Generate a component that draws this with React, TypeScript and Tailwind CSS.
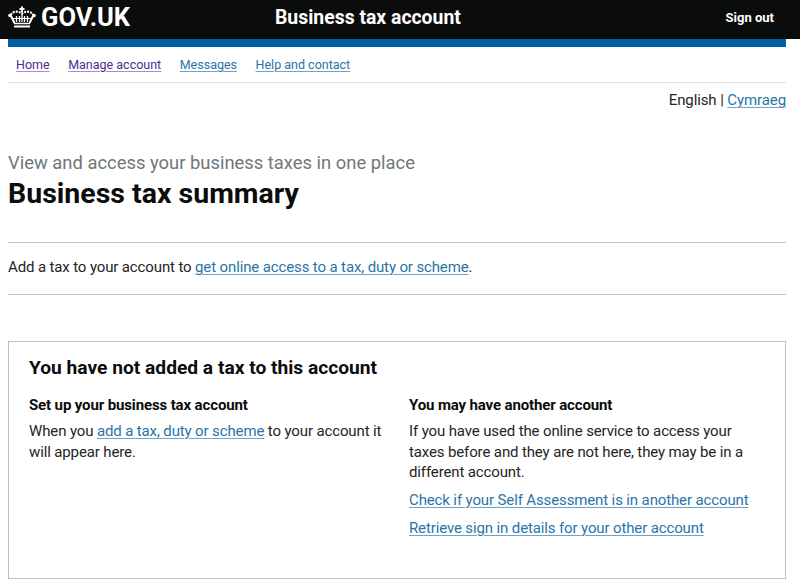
import React from 'react'

const linkClass = 'text-[#2b74a8] underline decoration-1 decoration-[#6ea3cb] underline-offset-2'
const visitedClass = 'text-[#4c2c92] underline decoration-1 decoration-[#a48fc9] underline-offset-2'

function Crown() {
  return (
    <svg viewBox="0 0 28 22" className="w-[28px] h-[22px] mb-[2px]" fill="none" stroke="#fff">
      <path d="M14 0.500v6M11.500 3h5" strokeWidth="2" />
      <path d="M6 17.500h16" strokeWidth="1.500" />
      <path d="M6 20.500h16" strokeWidth="2" />
      <path d="M6.500 17 3 10M21.500 17 25 10" strokeWidth="2" />
      <path d="M3 9c1-3.500 7-4.500 11-1.500C18 4.500 24 5.500 25 9" strokeWidth="2.200" strokeDasharray="2 1" />
      <path d="M8.500 10v6M11.500 10v6M14 8v8M16.500 10v6M19.500 10v6" strokeWidth="1.300" />
      <path d="M5 12.500h18" strokeWidth="1" />
      <circle cx="2" cy="9.500" r="1.800" fill="#fff" stroke="none" />
      <circle cx="26" cy="9.500" r="1.800" fill="#fff" stroke="none" />
    </svg>
  )
}

export default function App() {
  return (
    <div className="font-['Roboto','Liberation_Sans',sans-serif] text-[#242525] bg-white h-[588px] overflow-hidden">
      <header className="h-[39px] pb-[3px] bg-[#0b0c0c] text-white flex items-center">
        <div className="w-[275px] pl-[8px] flex items-center gap-[5px]">
          <Crown />
          <span className="text-[25.500px] font-bold leading-none">GOV.UK</span>
        </div>
        <div className="flex-1 text-[19.400px] font-bold">Business tax account</div>
        <div className="pr-[26px] text-[13px] font-bold">Sign out</div>
      </header>

      <div className="pl-[8px] pr-[14px]">
        <div className="h-[8px] bg-[#005ea5]" />
        <nav className="h-[36px] pt-[1px] border-b border-[#dee0e2] flex items-center gap-[18.500px] pl-[8px] text-[12.500px]">
          <a className={visitedClass}>Home</a>
          <a className={visitedClass}>Manage account</a>
          <a className={linkClass}>Messages</a>
          <a className={linkClass}>Help and contact</a>
        </nav>
        <div className="text-right text-[15px] tracking-[-0.100px] leading-[20px] pt-[7px]">
          English | <a className={linkClass}>Cymraeg</a>
        </div>

        <p className="mt-[41px] text-[18.400px] leading-[24px] text-[#6f777b]">View and access your business taxes in one place</p>
        <h1 className="text-[28.500px] font-bold leading-[36px] mt-[1px] text-[#0b0c0c]">Business tax summary</h1>

        <div className="mt-[30px] border-y border-[#bfc1c3] h-[53px] flex items-center pb-[2px] text-[15px] tracking-[-0.130px]">
          <span>
            Add a tax to your account to <a className={linkClass}>get online access to a tax, duty or scheme</a>.
          </span>
        </div>

        <section className="mt-[46px] h-[238px] border border-[#bfc1c3] pt-[13px] px-[20px]">
          <h2 className="text-[19.200px] font-bold leading-[26px] text-[#0b0c0c]">You have not added a tax to this account</h2>
          <div className="grid grid-cols-[360px_357px] gap-[20px] mt-[14px] text-[15px] tracking-[-0.130px] leading-[21px]">
            <div>
              <h3 className="font-bold text-[#0b0c0c]">Set up your business tax account</h3>
              <p className="mt-[5px]">
                When you <a className={linkClass}>add a tax, duty or scheme</a> to your account it will appear here.
              </p>
            </div>
            <div>
              <h3 className="font-bold text-[#0b0c0c]">You may have another account</h3>
              <p className="mt-[5px] leading-[20.500px]">
                If you have used the online service to access your taxes before and they are not here, they may be in a different account.
              </p>
              <p className="mt-[7px]"><a className={linkClass}>Check if your Self Assessment is in another account</a></p>
              <p className="mt-[7px]"><a className={linkClass}>Retrieve sign in details for your other account</a></p>
            </div>
          </div>
        </section>
      </div>
    </div>
  )
}
